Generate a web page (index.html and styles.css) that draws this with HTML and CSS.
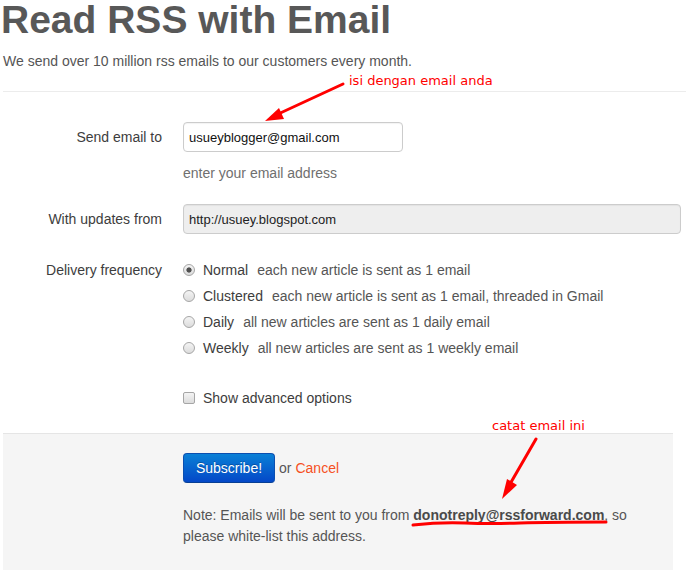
FILE: index.html
```html
<!DOCTYPE html>
<html lang="en">
<head>
    <meta charset="UTF-8">
    <meta name="viewport" content="width=device-width, initial-scale=1.0">
    <title>Read RSS with Email</title>
    <link rel="stylesheet" href="styles.css">
</head>
<body>
    <div class="page">
        <h1 class="title">Read RSS with Email</h1>
        <p class="lead">We send over 10 million rss emails to our customers every month.</p>
        <hr class="divider">

        <form class="subscribe-form">
            <div class="form-body">
                <div class="field field-email">
                    <label class="field-label" for="email">Send email to</label>
                    <div class="field-control">
                        <input class="text-input" id="email" type="text" value="usueyblogger@gmail.com">
                        <p class="help">enter your email address</p>
                    </div>
                </div>

                <div class="field field-feed">
                    <label class="field-label" for="feed">With updates from</label>
                    <div class="field-control">
                        <input class="text-input wide" id="feed" type="text" value="http://usuey.blogspot.com" disabled>
                    </div>
                </div>

                <div class="field field-frequency">
                    <div class="field-label">Delivery frequency</div>
                    <div class="field-control">
                        <label class="option">
                            <input class="radio" type="radio" name="freq" checked>
                            <span class="option-name">Normal</span>
                            <span class="option-desc">each new article is sent as 1 email</span>
                        </label>
                        <label class="option">
                            <input class="radio" type="radio" name="freq">
                            <span class="option-name">Clustered</span>
                            <span class="option-desc">each new article is sent as 1 email, threaded in Gmail</span>
                        </label>
                        <label class="option">
                            <input class="radio" type="radio" name="freq">
                            <span class="option-name">Daily</span>
                            <span class="option-desc">all new articles are sent as 1 daily email</span>
                        </label>
                        <label class="option">
                            <input class="radio" type="radio" name="freq">
                            <span class="option-name">Weekly</span>
                            <span class="option-desc">all new articles are sent as 1 weekly email</span>
                        </label>
                    </div>
                </div>

                <div class="field field-advanced">
                    <div class="field-label"></div>
                    <div class="field-control">
                        <label class="option check">
                            <input class="checkbox" type="checkbox">
                            <span class="option-name">Show advanced options</span>
                        </label>
                    </div>
                </div>
            </div>

            <div class="form-actions">
                <div class="actions-row">
                    <button class="btn-primary" type="button">Subscribe!</button>
                    <span class="or">or</span>
                    <a class="cancel" href="#">Cancel</a>
                </div>
                <p class="note">Note: Emails will be sent to you from <strong>donotreply@rssforward.com</strong>, so please white-list this address.</p>
            </div>
        </form>

        <!-- hand-drawn notes on top of the screenshot -->
        <div class="annotation note-email">isi dengan email anda</div>
        <div class="annotation note-sender">catat email ini</div>
        <svg class="markup" width="686" height="571" viewBox="0 0 686 571">
            <line x1="343" y1="84" x2="276" y2="115" stroke="#f00" stroke-width="3" stroke-linecap="round"/>
            <polygon points="265,121 284,119 279,108" fill="#f00"/>
            <line x1="536" y1="439" x2="510" y2="484" stroke="#f00" stroke-width="3" stroke-linecap="round"/>
            <polygon points="502,499 517,485 507,479" fill="#f00"/>
            <path d="M413 525 Q 440 522 465 523 T 520 523 T 606 522" stroke="#f00" stroke-width="3" fill="none" stroke-linecap="round"/>
        </svg>
    </div>
</body>
</html>
```

FILE: styles.css
```css
:root {
    --text: #555555;
    --label: #3d3d3d;
    --muted: #6f6f6f;
    --border: #cccccc;
    --panel: #f5f5f5;
    --red: #ff0000;
}

* {
    margin: 0;
    padding: 0;
    box-sizing: border-box;
}

body {
    font-family: "Liberation Sans", Arial, sans-serif;
    font-size: 14px;
    color: var(--text);
    background: #ffffff;
}

.page {
    position: relative;
    padding-left: 3px;
    min-height: 571px;
}

.title {
    margin-left: -2px;
    font-size: 39px;
    line-height: 40px;
    font-weight: 700;
    color: #585858;
}

.lead {
    margin-top: 11px;
    line-height: 20px;
}

.divider {
    margin-top: 20px;
    border: 0;
    border-top: 1px solid #ececec;
}

.form-body {
    padding: 30px 5px 0 0;
}

.field {
    display: grid;
    grid-template-columns: 159px 1fr;
    column-gap: 21px;
}

.field-label {
    text-align: right;
    line-height: 30px;
    color: var(--label);
}

.field-feed {
    margin-top: 21px;
}

.field-frequency {
    margin-top: 23px;
}

.field-frequency .field-label {
    line-height: 26px;
}

.field-advanced {
    margin-top: 27px;
}

.text-input {
    display: block;
    width: 220px;
    height: 30px;
    padding: 0 5px;
    font-family: "Liberation Sans", Arial, sans-serif;
    font-size: 13px;
    color: #111111;
    border: 1px solid var(--border);
    border-radius: 4px;
    background: #ffffff;
    box-shadow: inset 0 1px 1px rgba(0, 0, 0, 0.05);
}

.text-input.wide {
    width: 100%;
    background: #eeeeee;
    color: #222222;
}

.help {
    margin-top: 11px;
    line-height: 20px;
    color: var(--muted);
}

.option {
    display: flex;
    align-items: center;
    height: 26px;
}

.option.check {
    height: 20px;
}

.option-name {
    color: var(--label);
}

.option-desc {
    margin-left: 9px;
    color: var(--text);
}

.radio,
.checkbox {
    appearance: none;
    -webkit-appearance: none;
    flex: none;
    width: 12px;
    height: 12px;
    margin-right: 8px;
    border: 1px solid #a6a6a6;
    background: linear-gradient(#f4f4f4, #dcdcdc);
}

.radio {
    border-radius: 50%;
}

.radio:checked {
    background:
        radial-gradient(circle, #505050 0 2.2px, transparent 3px),
        linear-gradient(#f4f4f4, #dcdcdc);
}

.checkbox {
    border-radius: 2px;
}

.form-actions {
    margin: 25px 13px 0 0;
    padding: 19px 0 23px 180px;
    border-top: 1px solid #e5e5e5;
    background: var(--panel);
}

.actions-row {
    display: flex;
    align-items: center;
}

.btn-primary {
    width: 92px;
    height: 30px;
    font-family: "Liberation Sans", Arial, sans-serif;
    font-size: 14px;
    color: #ffffff;
    text-shadow: 0 -1px 0 rgba(0, 0, 0, 0.25);
    border: 1px solid #0b4fb0;
    border-bottom-color: #073f94;
    border-radius: 4px;
    background: linear-gradient(#0a80d6, #0448c8);
    cursor: pointer;
}

.or {
    margin-left: 4px;
    color: var(--text);
}

.cancel {
    margin-left: 4px;
    color: #f5501f;
    text-decoration: none;
}

.note {
    margin-top: 22px;
    max-width: 460px;
    line-height: 21px;
}

.note strong {
    color: #4a4a4a;
}

.annotation {
    position: absolute;
    font-family: "DejaVu Sans", sans-serif;
    font-size: 13px;
    line-height: 15px;
    color: var(--red);
    white-space: nowrap;
}

.note-email {
    left: 349px;
    top: 73px;
}

.note-sender {
    left: 492px;
    top: 418px;
}

.markup {
    position: absolute;
    left: 0;
    top: 0;
    pointer-events: none;
}
```
